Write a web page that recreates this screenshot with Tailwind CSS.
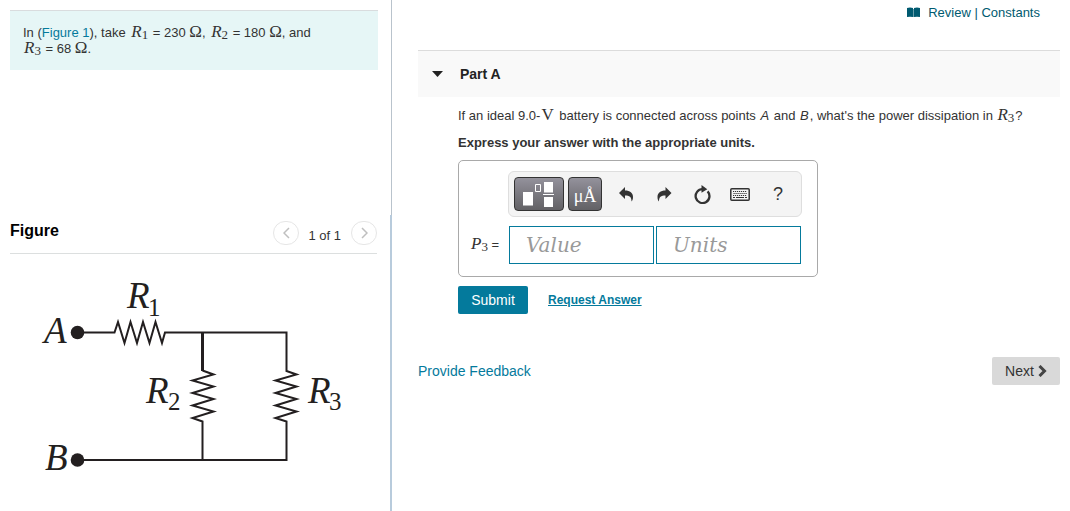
<!DOCTYPE html>
<html lang="en">
  <head>
    <meta charset="UTF-8" />
    <meta name="viewport" content="width=device-width, initial-scale=1.0" />
    <title>Part A - Power dissipation</title>
    <script src="https://cdn.jsdelivr.net/npm/@tailwindcss/browser@4"></script>
  </head>
  <body class="bg-white text-[#333] text-[13px] leading-4 font-['Liberation_Sans',Arial,sans-serif]">
    <div class="flex min-h-screen">
      <!-- Left column: problem statement and figure -->
      <aside class="w-[392px] shrink-0 flex flex-col">
        <div class="h-[215px] border-r border-[#b9c3cc] pl-[10px] pr-[13px] pt-[10px]">
          <section class="bg-[#e6f6f6] border-t border-[#d9dcde] h-[60px] px-[13px] pt-[14px]">
            <p class="leading-4">
              In (<a href="#figure" class="text-[#047a9c]">Figure 1</a>), take
              <span class="pl-[2px] pr-px font-['Liberation_Serif',serif] text-[17px] leading-0"><i>R</i><sub class="text-[13px] leading-0 bottom-[-2px]">1</sub></span>
              = 230 <span class="font-['Liberation_Serif',serif] text-[17px] leading-0">Ω</span>,
              <span class="pl-[2px] pr-px font-['Liberation_Serif',serif] text-[17px] leading-0"><i>R</i><sub class="text-[13px] leading-0 bottom-[-2px]">2</sub></span>
              = 180 <span class="font-['Liberation_Serif',serif] text-[17px] leading-0">Ω</span>, and<br />
              <span class="pl-px pr-px font-['Liberation_Serif',serif] text-[17px] leading-0"><i>R</i><sub class="text-[13px] leading-0 bottom-[-2px]">3</sub></span>
              = 68 <span class="font-['Liberation_Serif',serif] text-[17px] leading-0">Ω</span>.
            </p>
          </section>
        </div>

        <section id="figure" class="grow border-r-2 border-[#b8cbdc] pl-[10px] pr-[13px]">
          <div class="flex items-center border-b border-[#dcdfdf] h-[39px] pb-[2px]">
            <h2 class="grow text-base leading-5 font-bold text-black pb-1">Figure</h2>
            <div class="flex items-center gap-[9px]">
              <button type="button" aria-label="Previous figure" class="w-[26px] h-6 rounded-full border border-[#e6e6e6] flex items-center justify-center">
                <svg class="w-[7px] h-3" viewBox="0 0 7 12" fill="none" stroke="#bfbfbf" stroke-width="1.5">
                  <path d="M6 1L1 6l5 5" />
                </svg>
              </button>
              <span class="pt-[6px] pr-px">1 of 1</span>
              <button type="button" aria-label="Next figure" class="w-[26px] h-6 rounded-full border border-[#e6e6e6] flex items-center justify-center">
                <svg class="w-[7px] h-3" viewBox="0 0 7 12" fill="none" stroke="#bfbfbf" stroke-width="1.5">
                  <path d="M1 1l5 5-5 5" />
                </svg>
              </button>
            </div>
          </div>

          <!-- Circuit diagram -->
          <svg class="w-[350px] h-[236px]" viewBox="10 254 350 236" role="img" aria-label="Circuit with resistors R1, R2 and R3 between points A and B">
            <g fill="none" stroke="#231f20" stroke-width="2">
              <path d="M77 332.500H114.500L118 322l6.500 21 6-21 6.500 21 6-21 6.500 21 6-21 6.500 21 3-10.500H286.500V371l10 3.500-21 6 21 6-21 6.500 21 6-21 6.500 21 6-21 6.500 11 3.500V460H77" />
              <path d="M202.500 332V371" stroke-width="3" />
              <path d="M202.500 370.500l11 4-21 6 21 6-21 6.500 21 6-21 6.500 21 6-21 6.500 10 3.500V460" />
            </g>
            <circle cx="77.500" cy="332.500" r="6.800" fill="#231f20" />
            <circle cx="77.500" cy="460" r="6.800" fill="#231f20" />
            <g fill="#231f20" font-family="'Liberation Serif', serif" font-size="37" font-style="italic">
              <text x="44" y="343">A</text>
              <text x="45" y="470">B</text>
              <text x="127" y="308">R</text>
              <text x="146" y="403">R</text>
              <text x="308" y="403">R</text>
            </g>
            <g fill="#231f20" font-family="'Liberation Serif', serif" font-size="25">
              <text x="148" y="316">1</text>
              <text x="168" y="410">2</text>
              <text x="329" y="410">3</text>
            </g>
          </svg>
        </section>
      </aside>

      <!-- Right column: question -->
      <main class="grow min-w-0 pl-[26px] pr-[10px]">
        <nav class="flex justify-end items-center h-[50px] pb-[25px] pr-5 text-[#005a70]">
          <svg class="w-[13px] h-[11px] mr-2" viewBox="0 0 13 11" fill="#005a70">
            <path d="M0 1Q3 0 6 1V10Q3 9.300 0 10ZM7 1Q10 0 13 1V10Q10 9.300 7 10Z" />
            <path d="M6 2h1v8h-1z" opacity=".6" />
          </svg>
          <a href="#review">Review</a><span class="whitespace-pre"> | </span><a href="#constants">Constants</a>
        </nav>

        <header class="flex items-center bg-[#f9f9f9] border-t border-[#dcdcdc] h-[47px] pl-[14px]">
          <button type="button" aria-label="Collapse Part A" class="mr-[17px]">
            <svg class="w-[11px] h-[6px]" viewBox="0 0 11 6" fill="#222"><path d="M0 0h11L5.500 6z" /></svg>
          </button>
          <h2 class="text-sm leading-4 font-bold text-[#222]">Part A</h2>
        </header>

        <form class="pl-10 pt-[11px]">
          <p class="leading-4">
            If an ideal 9.0-<span class="pl-px pr-[2px] font-['Liberation_Serif',serif] text-[17px] leading-0">V</span>
            battery is connected across points <i class="px-px">A</i> and <i class="px-px">B</i>, what's the power dissipation in
            <span class="pl-px pr-px font-['Liberation_Serif',serif] text-[17px] leading-0"><i>R</i><sub class="text-[13px] leading-0 bottom-[-2px]">3</sub></span>?
          </p>
          <p class="font-bold pt-[11px]">Express your answer with the appropriate units.</p>

          <div class="mt-[9px] w-[360px] border border-[#a9a9a9] rounded-[5px] pt-[10px] pb-3 pr-4">
            <div class="ml-[49px] -mr-px h-[46px] flex items-center gap-1 bg-[#f4f4f4] border border-[#dedede] rounded-md pl-[5px] pr-1">
              <button type="button" aria-label="Templates" class="w-[50px] shrink-0 h-[34px] rounded-[4px] border border-[#333] bg-linear-to-b from-[#94929c] to-[#626165] flex items-center justify-center">
                <svg class="w-8 h-7" viewBox="0 0 32 28" fill="#fff">
                  <path d="M-.500 12h10.500v13.500h-10.500zM21 2h9v10.500h-9zM21 17h9v10h-9zM20 14h11v1H20z" />
                  <path d="M12.500 4.500h5v7h-5z" fill="none" stroke="#fff" />
                </svg>
              </button>
              <button type="button" aria-label="Unit symbols" class="w-[34px] shrink-0 h-[34px] rounded-[4px] border border-[#333] bg-linear-to-b from-[#94929c] to-[#626165] text-white text-lg leading-8 pt-[2px] font-['Liberation_Serif',serif]">μÅ</button>
              <div class="grow grid grid-cols-5 pl-[2px] text-[#333]">
                <button type="button" aria-label="Undo" class="flex items-center justify-center">
                  <svg class="w-[15px] h-[15px]" viewBox="0 0 15 15" fill="currentColor">
                    <path d="M6 0v3.500c5 0 8 2.500 8 6.500 0 2-.6 3.500-1.500 4.500C12.600 10 10.500 8.500 6 8.500V12L0 6z" />
                  </svg>
                </button>
                <button type="button" aria-label="Redo" class="flex items-center justify-center">
                  <svg class="w-[15px] h-[15px]" viewBox="0 0 15 15" fill="currentColor">
                    <path d="M8.500 0v3.500C3.500 3.500.5 6 .5 10c0 2 .6 3.500 1.500 4.500C1.900 10 4 8.500 8.500 8.500V12l6-6z" />
                  </svg>
                </button>
                <button type="button" aria-label="Reset" class="flex items-center justify-center">
                  <svg class="w-[17px] h-[19px]" viewBox="0 0 17 19" fill="none">
                    <path d="M13.600 6.400A6.900 6.900 0 1 1 8.500 4.200" stroke="currentColor" stroke-width="2.300" />
                    <path d="M7.500 0l5.800 4.200-5.800 3.600z" fill="currentColor" />
                  </svg>
                </button>
                <button type="button" aria-label="Keyboard" class="flex items-center justify-center">
                  <svg class="w-5 h-[13px]" viewBox="0 0 20 13" fill="none" stroke="currentColor">
                    <rect x=".8" y=".8" width="18.400" height="11.400" rx="1" stroke-width="1.500" />
                    <path d="M3 3.500h14M3.500 5.500h14M3 7.500h14" stroke-dasharray="1.200 .8" />
                    <path d="M3 9.500h2M6 9.500h8M15 9.500h2" />
                  </svg>
                </button>
                <button type="button" aria-label="Help" class="text-lg leading-5">?</button>
              </div>
            </div>

            <div class="flex items-center mt-[9px]">
              <label for="value" class="w-[50px] shrink-0 pl-3 whitespace-nowrap">
                <span class="font-['Liberation_Serif',serif] text-[17px] leading-0"><i>P</i><sub class="text-[13px] leading-0 bottom-[-2px]">3</sub></span>
                =
              </label>
              <div class="grow min-w-0 flex gap-[2px]">
                <input id="value" type="text" placeholder="Value" class="w-0 flex-1 h-[38px] border border-[#047a9c] px-4 italic text-xl font-['DejaVu_Serif',serif] placeholder:text-[#999]" />
                <input type="text" placeholder="Units" aria-label="Units" class="w-0 flex-1 h-[38px] border border-[#047a9c] px-4 italic text-xl font-['DejaVu_Serif',serif] placeholder:text-[#999]" />
              </div>
            </div>
          </div>

          <div class="flex items-center gap-5 mt-[9px]">
            <button type="submit" class="w-[70px] h-7 rounded-[2px] bg-[#047a9c] text-white text-sm">Submit</button>
            <a href="#answer" class="text-xs font-bold underline text-[#047a9c]">Request Answer</a>
          </div>
        </form>

        <footer class="flex items-center justify-between mt-[43px]">
          <a href="#feedback" class="text-sm text-[#047a9c]">Provide Feedback</a>
          <button type="button" class="w-[68px] h-7 rounded-[2px] bg-[#d9d9d9] text-sm flex items-center justify-center gap-1">
            Next
            <svg class="w-[9px] h-3" viewBox="0 0 9 12" fill="none" stroke="#444" stroke-width="3">
              <path d="M1.500 1l5 5-5 5" />
            </svg>
          </button>
        </footer>
      </main>
    </div>
  </body>
</html>
